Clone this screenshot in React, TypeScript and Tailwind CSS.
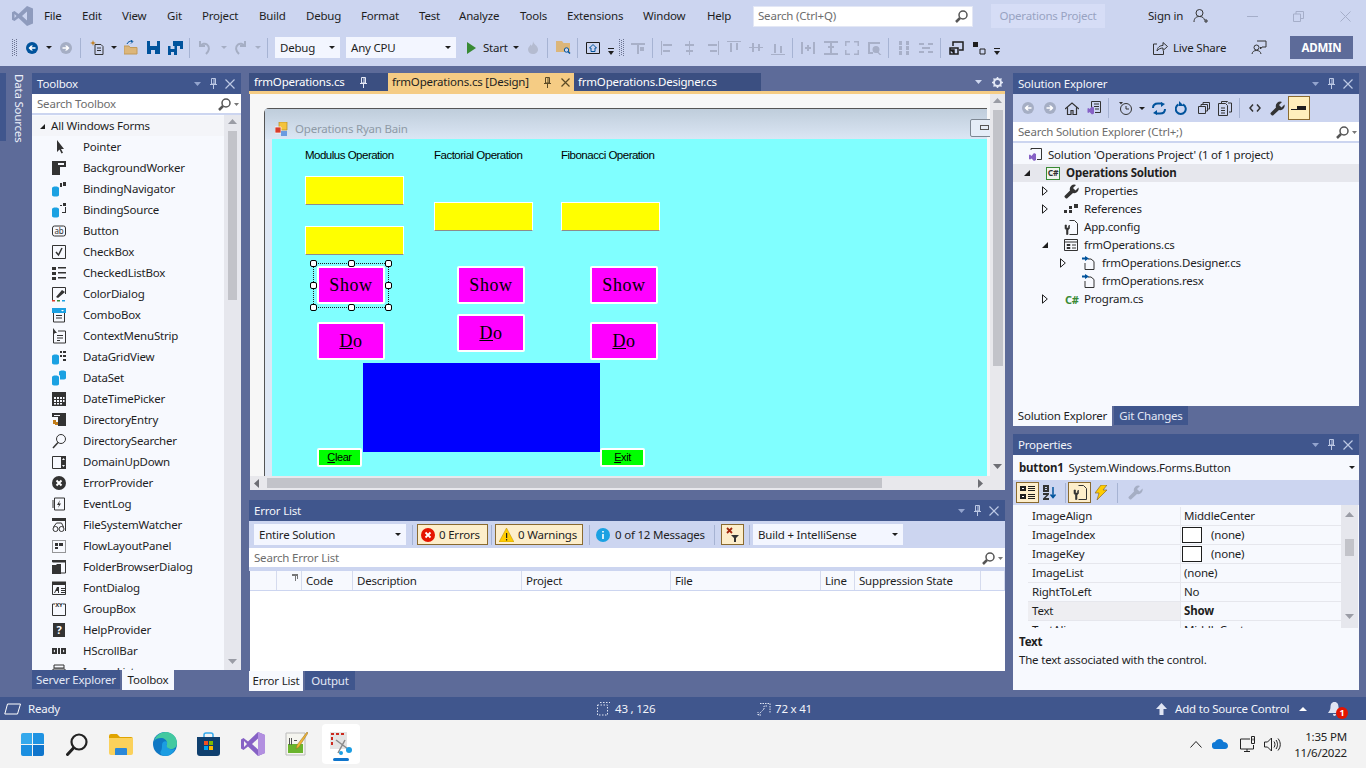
import type { ReactNode } from "react";

const toolboxItems = [
  "Pointer", "BackgroundWorker", "BindingNavigator", "BindingSource", "Button", "CheckBox", "CheckedListBox",
  "ColorDialog", "ComboBox", "ContextMenuStrip", "DataGridView", "DataSet", "DateTimePicker", "DirectoryEntry",
  "DirectorySearcher", "DomainUpDown", "ErrorProvider", "EventLog", "FileSystemWatcher", "FlowLayoutPanel",
  "FolderBrowserDialog", "FontDialog", "GroupBox", "HelpProvider", "HScrollBar", "ImageList"
];

const menus = ["File", "Edit", "View", "Git", "Project", "Build", "Debug", "Format", "Test", "Analyze", "Tools", "Extensions", "Window", "Help"];

const properties: Array<{ name: string; value: string; swatch?: boolean; active?: boolean }> = [
  { name: "ImageAlign", value: "MiddleCenter" },
  { name: "ImageIndex", value: "(none)", swatch: true },
  { name: "ImageKey", value: "(none)", swatch: true },
  { name: "ImageList", value: "(none)" },
  { name: "RightToLeft", value: "No" },
  { name: "Text", value: "Show", active: true },
  { name: "TextAlign", value: "MiddleCenter" }
];

export default function App() {
  return (
    <div className="flex h-[768px] w-[1366px] flex-col overflow-hidden bg-[#5d6b99] font-['Noto_Sans',sans-serif] text-[11.5px] tracking-[-0.2px] text-[#1e1e1e]">
      <TitleBar />
      <MainToolbar />
      <div className="flex h-[631px] pt-[7px]">
        <div className="w-[32px] shrink-0 pt-0">
          <div className="flex h-[68px]">
            <div className="w-[6px] bg-[#40568d]" />
            <div className="whitespace-nowrap pl-[5px] pt-[1px] text-[#eef1fb] [writing-mode:vertical-rl]">Data Sources</div>
          </div>
        </div>
        <ToolboxPanel />
        <div className="ml-[8px] flex w-[756px] shrink-0 flex-col">
          <EditorTabs />
          <Designer />
          <ErrorList />
        </div>
        <div className="ml-[8px] flex w-[346px] shrink-0 flex-col">
          <SolutionExplorer />
          <PropertiesPanel />
        </div>
      </div>
      <StatusBar />
      <Taskbar />
    </div>
  );
}

function TitleBar() {
  return (
    <div className="flex h-[32px] shrink-0 items-center bg-[#ccd5f0]">
      <div className="ml-[12px] w-[32px]">
        <svg width="21" height="20" viewBox="0 0 21 20"><path d="M15 0l6 2.600v14.800L15 20 6.500 12l-4 3L0 13.800V6.200L2.500 5l4 3zM15 5.500L10 10l5 4.500zM2.500 8v4l2-2z" fill="#8e9bbd" /></svg>
      </div>
      <div className="grid grid-cols-[38px_40px_45px_35px_57px_47px_55px_58px_40px_61px_47px_76px_64px_45px]">
        {menus.map((menu) => <span key={menu}>{menu}</span>)}
      </div>
      <div className="ml-[1px] flex h-[21px] w-[220px] items-center justify-between border border-[#e3e7f5] bg-white px-[4px] text-[#6d6d6d]">
        <span>Search (Ctrl+Q)</span>
        <SearchGlass />
      </div>
      <div className="ml-[18px] flex h-[24px] w-[114px] items-center justify-center bg-[#d6ddf6] text-[#98a3c2]">Operations Project</div>
      <span className="ml-[43px] w-[45px]">Sign in</span>
      <svg width="16" height="16" viewBox="0 0 16 16" fill="none" stroke="#333" strokeWidth="1"><circle cx="6.500" cy="5" r="3.500" /><path d="M1 14c0-4 2.500-5.500 5.500-5.500S11 10 11.500 12M13 11v4M11 13h4" /></svg>
      <div className="ml-[38px] h-[1px] w-[11px] bg-[#a5aec9]" />
      <svg className="ml-[35px]" width="11" height="11" viewBox="0 0 11 11" fill="none" stroke="#a5aec9"><path d="M.5 3h7v7.500h-7zM3 3V.5h7.500v7H8" /></svg>
      <svg className="ml-[36px]" width="11" height="11" viewBox="0 0 11 11" stroke="#a5aec9"><path d="M.5.5l10 10M10.500.5l-10 10" /></svg>
    </div>
  );
}

function MainToolbar() {
  return (
    <div className="flex h-[34px] shrink-0 items-center bg-[#ccd5f0] pb-[3px] pl-[12px]">
      <Slot w="w-[14px]"><Grip /></Slot>
      <Slot w="w-[20px]"><ArrowCircle color="#00539c" dir="left" /></Slot>
      <Slot w="w-[14px]"><Caret /></Slot>
      <Slot w="w-[20px]"><ArrowCircle color="#a5aec4" dir="right" /></Slot>
      <Sep w="w-[10px]" />
      <Slot w="w-[21px]">
        <svg width="14" height="15" viewBox="0 0 14 15" fill="none"><path d="M5 4.500h6l2 2v8H5z" stroke="#333" /><path d="M7 8h4M7 10.500h4" stroke="#333" /><path d="M3 0l.7 2.300L6 3l-2.300.7L3 6l-.7-2.300L0 3l2.300-.7z" fill="#c27d1a" /></svg>
      </Slot>
      <Slot w="w-[13px]"><Caret /></Slot>
      <Slot w="w-[23px]">
        <svg width="15" height="15" viewBox="0 0 15 15"><path d="M0 6h5l1 1.500h7V14H0z" fill="#dcb67a" stroke="#c29a58" /><path d="M3 4c1-2.500 3-3 5-2.500M6.500 0L9 1.500 7 3.500" fill="none" stroke="#00539c" /></svg>
      </Slot>
      <Slot w="w-[21px]"><Floppy /></Slot>
      <Slot w="w-[21px]">
        <svg width="15" height="14" viewBox="0 0 15 14"><path d="M5 0h10v8h-3V5H5z" fill="#00539c" /><path d="M0 5h9v9H0z" fill="#00539c" /><path d="M2.500 5h4v3h-4zM3 11h3v3H3z" fill="#ccd5f0" /></svg>
      </Slot>
      <Sep w="w-[10px]" />
      <Slot w="w-[22px]"><UndoIcon /></Slot>
      <Slot w="w-[13px]"><Caret light /></Slot>
      <Slot w="w-[21px]"><UndoIcon flip /></Slot>
      <Slot w="w-[12px]"><Caret light /></Slot>
      <Sep w="w-[8px]" />
      <div className="w-[71px] shrink-0"><Combo label="Debug" w="w-[65px]" /></div>
      <div className="w-[121px] shrink-0"><Combo label="Any CPU" w="w-[110px]" /></div>
      <Slot w="w-[16px]"><svg width="9" height="12" viewBox="0 0 9 12"><path d="M0 0l9 6-9 6z" fill="#388a34" /></svg></Slot>
      <span className="w-[30px] shrink-0">Start</span>
      <Slot w="w-[15px]"><Caret /></Slot>
      <Slot w="w-[19px]"><svg width="10" height="13" viewBox="0 0 10 13"><path d="M5 0c0 3 5 4.500 5 8.500C10 11 8 13 5 13s-5-2-5-4.500C0 6 2 5.500 2.500 3.500 3.500 4 3.500 5 3.500 5 4.500 4 5 2 5 0z" fill="#b4bbd0" /></svg></Slot>
      <Sep w="w-[9px]" />
      <Slot w="w-[21px]"><svg width="15" height="13" viewBox="0 0 15 13"><path d="M0 0h6l1.500 2H14v9H0z" fill="#dcb67a" /><circle cx="10.500" cy="9" r="2.200" fill="#ccd5f0" stroke="#00539c" /><path d="M12 10.500l2 2" stroke="#00539c" strokeWidth="1.500" /></svg></Slot>
      <Sep w="w-[9px]" />
      <Slot w="w-[22px]"><svg width="14" height="12" viewBox="0 0 14 12" fill="none"><path d="M.5.5h13v11H.5z" stroke="#1e1e1e" /><path d="M7 2.500L3.500 6H5v3.500h4V6h1.500z" stroke="#00539c" /></svg></Slot>
      <Slot w="w-[11px]"><OverflowMark /></Slot>
      <Slot w="w-[12px]"><Grip /></Slot>
      <Slot w="w-[21px]"><GrayTool d="M0 2h14v2H0zM6 4h2v9H6zM9 6h4v4H9z" /></Slot>
      <Sep w="w-[9px]" />
      <Slot w="w-[22px]"><GrayTool d="M0 0h1v14H0zM2 3h9v2H2zM2 9h7v2H2z" /></Slot>
      <Slot w="w-[22px]"><GrayTool d="M6 0h1v14H6zM2 3h9v2H2zM3 9h7v2H3z" /></Slot>
      <Slot w="w-[22px]"><GrayTool d="M13 0h1v14h-1zM3 3h9v2H3zM5 9h7v2H5z" /></Slot>
      <Slot w="w-[22px]"><GrayTool d="M0 0h14v1H0zM3 2h2v9H3zM9 2h2v7H9z" /></Slot>
      <Slot w="w-[22px]"><GrayTool d="M0 6h14v1H0zM3 2h2v9H3zM9 3h2v7H9z" /></Slot>
      <Slot w="w-[21px]"><GrayTool d="M0 13h14v1H0zM3 3h2v9H3zM9 5h2v7H9z" /></Slot>
      <Sep w="w-[9px]" />
      <Slot w="w-[23px]"><GrayTool d="M0 1h2v12H0zM12 1h2v12h-2zM6 4h2v6H6zM4 6h6v2H4z" /></Slot>
      <Slot w="w-[21px]"><GrayTool d="M0 0h14v2H0zM0 12h14v2H0zM6 2h2v10H6zM4 5h6v2H4z" /></Slot>
      <Slot w="w-[23px]"><GrayTool d="M0 0h5v1.500H1.500V5H0zM9 0h5v5h-1.500V1.500H9zM0 9h1.500v3.500H5V14H0zM12.500 9H14v5H9v-1.500h3.500z" /></Slot>
      <Slot w="w-[20px]"><GrayTool d="M0 1h12v2H2v8h3v2H0zM8 5a3.500 3.500 0 110 7 3.500 3.500 0 010-7zM10.500 11l3 3-1 .8-3-3z" /></Slot>
      <Sep w="w-[11px]" />
      <Slot w="w-[20px]"><GrayTool d="M0 0h3v4H0zM0 10h3v4H0zM0 5h3v4H0zM7 0h3v4H7zM7 10h3v4H7zM7 5h3v4H7z" /></Slot>
      <Slot w="w-[21px]"><GrayTool d="M0 2h5v2H0zM0 10h5v2H0zM9 2h5v2H9zM9 10h5v2H9zM3 6h8v2H3z" /></Slot>
      <Sep w="w-[9px]" />
      <Slot w="w-[23px]"><svg width="15" height="14" viewBox="0 0 15 14" fill="none" stroke="#1e1e1e" strokeWidth="1.500"><path d="M4 5V1h10v8h-4M1 7v6h8V7z" /><path d="M1 9h4v4" fill="#1e1e1e" /></svg></Slot>
      <Slot w="w-[22px]"><svg width="14" height="14" viewBox="0 0 14 14"><path d="M1 1h5v5H1z" fill="#1e1e1e" /><path d="M8 8h5v5H8z" fill="#ccd5f0" stroke="#1e1e1e" /></svg></Slot>
      <Slot w="w-[10px]"><OverflowMark /></Slot>
      <div className="ml-[149px] flex w-[75px] items-center gap-[5px] whitespace-nowrap">
        <svg className="shrink-0" width="15" height="14" viewBox="0 0 15 14" fill="none" stroke="#333"><path d="M4 3H.5v10.500h10V10M4 10c.5-4 3-5.500 6-5.500V1.500l4.500 4-4.500 4V7c-2.500 0-4.500 1-6 3z" /></svg>
        <span>Live Share</span>
      </div>
      <svg className="ml-[23px]" width="16" height="16" viewBox="0 0 16 16" fill="none" stroke="#333"><circle cx="5.500" cy="7.500" r="2.500" /><path d="M1 14c.5-2.500 2-3.500 4.500-3.500S9.500 11.500 10 14M6 1h9v6h-4l-1.500 2V7" /></svg>
      <div className="ml-[23px] flex h-[23px] w-[63px] items-center justify-center bg-[#5d6b99] font-bold text-white">ADMIN</div>
    </div>
  );
}

function ToolboxPanel() {
  return (
    <div className="flex w-[209px] shrink-0 flex-col">
      <PanelTitle title="Toolbox" />
      <SearchRow placeholder="Search Toolbox" />
      <div className="flex h-[555px] bg-[#f7f9fe]">
        <div className="w-[192px] overflow-hidden pt-[1px]">
          <div className="flex h-[20px] items-center bg-[#f4f5f9]">
            <svg className="ml-[8px] mr-[6px]" width="5" height="5" viewBox="0 0 5 5"><path d="M5 0v5H0z" fill="#1e1e1e" /></svg>
            <span>All Windows Forms</span>
          </div>
          {toolboxItems.map((name) => (
            <div key={name} className="flex h-[21px] items-center">
              <div className="ml-[20px] flex w-[31px] shrink-0"><ToolIcon name={name} /></div>
              <span>{name}</span>
            </div>
          ))}
        </div>
        <VScroll trackHeight="h-[169px]" offset="mt-[7px]" />
      </div>
      <div className="flex h-[20px] items-start">
        <div className="flex h-[19px] w-[88px] items-center justify-center bg-[#40568d] text-[#e3e8f6]">Server Explorer</div>
        <div className="ml-[2px] flex h-[20px] w-[52px] items-center justify-center bg-[#f7f9fe]">Toolbox</div>
      </div>
    </div>
  );
}

function EditorTabs() {
  return (
    <div className="flex h-[21px] shrink-0 items-start border-b-[3px] border-[#f5cc84]">
      <div className="flex h-[18px] w-[139px] items-center justify-between bg-[#3b4f81] pl-[5px] pr-[21px] text-white">
        <span>frmOperations.cs</span>
        <PinIcon color="#e4e8f5" />
      </div>
      <div className="flex h-[18px] w-[186px] items-center bg-[#f5cc84] pl-[4px]">
        <span className="w-[152px] shrink-0">frmOperations.cs [Design]</span>
        <PinIcon color="#5b4a24" />
        <svg className="ml-[10px]" width="9" height="9" viewBox="0 0 9 9" stroke="#5b4a24" strokeWidth="1.200"><path d="M.5.500l8 8M8.500.500l-8 8" /></svg>
      </div>
      <div className="flex h-[18px] w-[187px] items-center bg-[#3b4f81] pl-[4px] text-white">frmOperations.Designer.cs</div>
      <div className="ml-auto flex h-[18px] items-center gap-[10px] pr-[2px]">
        <svg width="7" height="4" viewBox="0 0 7 4"><path d="M0 0h7L3.500 4z" fill="#cfd8ef" /></svg>
        <svg width="11" height="11" viewBox="0 0 11 11"><circle cx="5.500" cy="5.500" r="3.500" fill="none" stroke="#e3e8f6" strokeWidth="2" /><path d="M5.500 0v2M5.500 9v2M0 5.500h2M9 5.500h2M1.500 1.500L3 3M8 8l1.500 1.500M9.500 1.500L8 3M3 8L1.500 9.500" stroke="#e3e8f6" strokeWidth="1.500" /></svg>
      </div>
    </div>
  );
}

function Designer() {
  return (
    <div className="ml-[1px] flex h-[396px] w-[755px] shrink-0 flex-col bg-[#f7f7f7]">
      <div className="flex h-[382px]">
        <div className="w-[740px] overflow-hidden pl-[14px] pt-[14px]">
          <div className="w-[723px] rounded-tl-[5px] border-l border-t border-[#555] bg-[#dfe8f5]">
            <div className="relative flex h-[30px] items-center bg-gradient-to-b from-[#bfcddb] to-[#dbe6f4] pl-[10px] pt-[9px] text-[#8e9aa6]">
              <svg width="14" height="14" viewBox="0 0 14 14"><path d="M4 0h8v8H4z" fill="#f4c33d" stroke="#b58a20" strokeWidth=".7" /><path d="M0 5h6v6H0z" fill="#d83b2a" stroke="#fff" strokeWidth=".7" /><path d="M6 9h6v5H6z" fill="#6a9be0" /></svg>
              <span className="ml-[6px]">Operations Ryan Bain</span>
              <div className="absolute left-[705px] top-[10px] h-[18px] w-[30px] rounded-[2px] border border-[#7d8792] bg-[#e5edf7]">
                <div className="ml-[9px] mt-[5px] h-[5px] w-[9px] border border-[#555]" />
              </div>
            </div>
            <FormCanvas />
          </div>
        </div>
        <div className="flex w-[15px] flex-col items-center bg-[#e8e8ec]">
          <svg className="mt-[4px]" width="9" height="5" viewBox="0 0 9 5"><path d="M4.500 0L9 5H0z" fill="#9a9ca5" /></svg>
          <div className="mt-[7px] h-[256px] w-[10px] bg-[#c2c3c9]" />
          <svg className="mb-[7px] mt-auto" width="9" height="5" viewBox="0 0 9 5"><path d="M0 0h9L4.500 5z" fill="#6d6e74" /></svg>
        </div>
      </div>
      <div className="flex h-[14px] items-center bg-[#e8e8ec] pl-[4px]">
        <svg width="5" height="9" viewBox="0 0 5 9"><path d="M5 0v9L0 4.500z" fill="#6d6e74" /></svg>
        <div className="ml-[8px] h-[10px] w-[615px] bg-[#c2c3c9]" />
        <svg className="ml-[96px]" width="5" height="9" viewBox="0 0 5 9"><path d="M0 0v9l5-4.500z" fill="#6d6e74" /></svg>
      </div>
    </div>
  );
}

function FormCanvas() {
  return (
    <div className="relative ml-[7px] h-[337px] w-[715px] bg-[#80ffff] font-['Liberation_Sans',sans-serif]">
      <FormLabel text="Modulus Operation" className="left-[33px]" />
      <FormLabel text="Factorial Operation" className="left-[162px]" />
      <FormLabel text="Fibonacci Operation" className="left-[289px]" />
      <YellowBox className="left-[33px] top-[37px]" />
      <YellowBox className="left-[33px] top-[87px]" />
      <YellowBox className="left-[162px] top-[63px]" />
      <YellowBox className="left-[289px] top-[63px]" />
      <MagentaButton label="Show" className="left-[45px] top-[127px]" />
      <MagentaButton label="Do" mnemonic className="left-[45px] top-[183px]" />
      <MagentaButton label="Show" className="left-[185px] top-[127px]" />
      <MagentaButton label="Do" mnemonic className="left-[185px] top-[175px]" />
      <MagentaButton label="Show" className="left-[318px] top-[127px]" />
      <MagentaButton label="Do" mnemonic className="left-[318px] top-[183px]" />
      <div className="absolute left-[91px] top-[224px] h-[89px] w-[237px] bg-[#0000ff]" />
      <GreenButton first="C" rest="lear" className="left-[45px] top-[309px]" />
      <GreenButton first="E" rest="xit" className="left-[328px] top-[309px]" />
      <div className="absolute left-[41px] top-[124px] h-[45px] w-[76px] border border-dotted border-[#222]" />
      {["left-[38px] top-[121px]", "left-[76px] top-[121px]", "left-[113px] top-[121px]", "left-[38px] top-[143px]", "left-[113px] top-[143px]", "left-[38px] top-[165px]", "left-[76px] top-[165px]", "left-[113px] top-[165px]"].map((place) => (
        <div key={place} className={`absolute h-[7px] w-[7px] rounded-[2px] border border-black bg-white ${place}`} />
      ))}
    </div>
  );
}

function FormLabel({ text, className }: { text: string; className: string }) {
  return <span className={`absolute top-[8px] whitespace-nowrap text-[11.5px] tracking-[-0.5px] text-black ${className}`}>{text}</span>;
}

function YellowBox({ className }: { className: string }) {
  return <div className={`absolute h-[29px] w-[99px] border border-b-[#8c8c8c] border-l-white border-r-white border-t-white bg-[#ffff00] ${className}`} />;
}

function MagentaButton({ label, mnemonic, className }: { label: string; mnemonic?: boolean; className: string }) {
  return (
    <div className={`absolute flex h-[38px] w-[68px] items-center justify-center rounded-[2px] border-[2px] border-white bg-[#ff00ff] font-['Liberation_Serif',serif] text-[18px] tracking-[0.6px] text-black ${className}`}>
      {mnemonic ? <span><span className="underline">{label[0]}</span>{label.slice(1)}</span> : label}
    </div>
  );
}

function GreenButton({ first, rest, className }: { first: string; rest: string; className: string }) {
  return (
    <div className={`absolute flex h-[19px] w-[45px] items-center justify-center rounded-[2px] border-[2px] border-white bg-[#00ff00] text-[11px] tracking-[-0.4px] text-black ${className}`}>
      <span><span className="underline">{first}</span>{rest}</span>
    </div>
  );
}

function ErrorList() {
  return (
    <div className="mt-[10px] flex flex-col">
      <PanelTitle title="Error List" />
      <div className="flex h-[27px] items-center bg-[#ccd5f0] pl-[5px]">
        <Combo label="Entire Solution" w="w-[152px]" />
        <div className="ml-[6px]"><Sep w="w-[5px]" /></div>
        <FilterButton w="w-[71px]">
          <svg width="14" height="14" viewBox="0 0 14 14"><circle cx="7" cy="7" r="7" fill="#e51400" /><path d="M4.500 4.500l5 5M9.500 4.500l-5 5" stroke="#fff" strokeWidth="1.800" /></svg>
          <span>0 Errors</span>
        </FilterButton>
        <div className="ml-[3px]"><Sep w="w-[4px]" /></div>
        <FilterButton w="w-[88px]">
          <svg width="15" height="14" viewBox="0 0 15 14"><path d="M7.500 0L15 14H0z" fill="#ffcc00" stroke="#b58a00" strokeWidth=".5" /><path d="M7 5h1.200v5H7zM7 11h1.200v1.400H7z" fill="#1e1e1e" /></svg>
          <span>0 Warnings</span>
        </FilterButton>
        <div className="ml-[6px]"><Sep w="w-[6px]" /></div>
        <div className="flex w-[113px] items-center gap-[5px] whitespace-nowrap pl-[1px]">
          <svg className="shrink-0" width="14" height="14" viewBox="0 0 14 14"><circle cx="7" cy="7" r="7" fill="#1ba1e2" /><path d="M6.200 3h1.600v1.500H6.200zM6.200 6h1.600v5H6.200z" fill="#fff" /></svg>
          <span>0 of 12 Messages</span>
        </div>
        <div className="ml-[6px]"><Sep w="w-[7px]" /></div>
        <div className="flex h-[21px] w-[23px] items-center justify-center border border-[#8a6a2f] bg-[#fdeecb]">
          <svg width="14" height="15" viewBox="0 0 14 15"><path d="M1 1l5 5M6 1L1 6" stroke="#a1260d" strokeWidth="1.800" /><path d="M5 8h8L10 11v4H8v-4z" fill="#333" /></svg>
        </div>
        <div className="ml-[5px]"><Sep w="w-[4px]" /></div>
        <Combo label="Build + IntelliSense" w="w-[150px]" />
      </div>
      <SearchRow placeholder="Search Error List" />
      <div className="h-[2px] bg-[#ccd5f0]" />
      <div className="ml-[1px] grid h-[20px] grid-cols-[27px_25px_51px_169px_149px_150px_34px_126px_24px] border-b border-[#ccd5f0] bg-[#f7f9fe]">
        {["", "", "Code", "Description", "Project", "File", "Line", "Suppression State", ""].map((heading, index) => (
          <div key={`${heading}-${index}`} className="relative flex items-center border-r border-[#d5dbee] pl-[4px]">
            {index === 1 ? <svg className="absolute right-[3px] top-[3px]" width="6" height="7" viewBox="0 0 6 7"><path d="M0 0h6v2H0zM3 2h1v5H3zM5 2h1v3H5z" fill="#777" /></svg> : null}
            {heading}
          </div>
        ))}
      </div>
      <div className="ml-[1px] h-[80px] bg-white" />
      <div className="flex h-[20px] items-start">
        <div className="flex h-[20px] w-[54px] items-center justify-center bg-[#f7f9fe]">Error List</div>
        <div className="ml-[2px] flex h-[19px] w-[50px] items-center justify-center bg-[#40568d] text-[#e3e8f6]">Output</div>
      </div>
    </div>
  );
}

function SolutionExplorer() {
  return (
    <div className="flex h-[353px] flex-col">
      <PanelTitle title="Solution Explorer" />
      <div className="flex h-[28px] items-center bg-[#ccd5f0] pl-[9px]">
        <Slot w="w-[22px]"><ArrowCircle color="#a5aec4" dir="left" /></Slot>
        <Slot w="w-[21px]"><ArrowCircle color="#a5aec4" dir="right" /></Slot>
        <Slot w="w-[22px]"><HomeIcon /></Slot>
        <Slot w="w-[21px]"><VsFileIcon /></Slot>
        <Sep w="w-[11px]" />
        <Slot w="w-[20px]"><svg width="13" height="14" viewBox="0 0 13 14" fill="none" stroke="#333"><circle cx="7" cy="8" r="5.500" /><path d="M7 5v3h3" /><path d="M0 1h4L2 3.500z" fill="#333" stroke="none" /></svg></Slot>
        <Slot w="w-[13px]"><Caret /></Slot>
        <Slot w="w-[23px]"><svg width="14" height="13" viewBox="0 0 14 13" fill="none" stroke="#00539c" strokeWidth="2"><path d="M1 6c0-3 2-4.500 5-4.500h4M13 7c0 3-2 4.500-5 4.500H4" /><path d="M9 0l4 2-4 3zM5 8l-4 3 4 2z" fill="#00539c" stroke="none" /></svg></Slot>
        <Slot w="w-[23px]"><svg width="12" height="14" viewBox="0 0 12 14" fill="none" stroke="#00539c" strokeWidth="2"><path d="M8 3.500a5 5 0 11-4.500 0" /><path d="M4 0v5H9z" fill="#00539c" stroke="none" /></svg></Slot>
        <Slot w="w-[20px]"><svg width="12" height="12" viewBox="0 0 12 12" fill="none" stroke="#333"><path d="M.5 4.500h7v7h-7zM3 4V2.500h6.500V9H8M5 2V.5h6.500V7H10" /></svg></Slot>
        <Slot w="w-[21px]"><svg width="14" height="15" viewBox="0 0 14 15" fill="none" stroke="#333"><path d="M3.500 2V.5h6l-1 1M.5 2.500h7l2 2v10H.5zM3 7h4M3 9.500h4M3 12h4M10 2h3.500v9H11" /></svg></Slot>
        <Sep w="w-[10px]" />
        <Slot w="w-[21px]"><svg width="12" height="8" viewBox="0 0 12 8" fill="none" stroke="#333" strokeWidth="1.500"><path d="M4 .5L1 4l3 3.500M8 .5L11 4 8 7.500" /></svg></Slot>
        <Slot w="w-[18px]"><WrenchIcon color="#333" /></Slot>
        <div className="flex h-[24px] w-[22px] items-center justify-center border border-[#8a6a2f] bg-[#ffefbb]">
          <svg width="16" height="6" viewBox="0 0 16 6"><path d="M0 4h6V1h9v4H0z" fill="#1e1e1e" /></svg>
        </div>
      </div>
      <SearchRow placeholder="Search Solution Explorer (Ctrl+;)" />
      <div className="h-[263px] bg-[#f7f9fe] pt-[3px]">
        <TreeRow indent="-ml-[7px]" icon={<VsSolutionIcon />}>Solution 'Operations Project' (1 of 1 project)</TreeRow>
        <TreeRow arrow="open" indent="ml-[11px]" active icon={<CsProjectIcon />}><b>Operations Solution</b></TreeRow>
        <TreeRow arrow="closed" indent="ml-[29px]" icon={<WrenchIcon color="#333" />}>Properties</TreeRow>
        <TreeRow arrow="closed" indent="ml-[29px]" icon={<RefsIcon />}>References</TreeRow>
        <TreeRow indent="ml-[29px]" icon={<ConfigIcon />}>App.config</TreeRow>
        <TreeRow arrow="open" indent="ml-[29px]" icon={<FormIcon />}>frmOperations.cs</TreeRow>
        <TreeRow arrow="closed" indent="ml-[47px]" icon={<DependentFileIcon />}>frmOperations.Designer.cs</TreeRow>
        <TreeRow indent="ml-[47px]" icon={<DependentFileIcon />}>frmOperations.resx</TreeRow>
        <TreeRow arrow="closed" indent="ml-[29px]" icon={<span className="ml-[1px] text-[11px] font-bold leading-none text-[#388a34]">C#</span>}>Program.cs</TreeRow>
      </div>
      <div className="flex h-[20px] items-start">
        <div className="flex h-[20px] w-[99px] items-center justify-center bg-[#f7f9fe]">Solution Explorer</div>
        <div className="ml-[2px] flex h-[19px] w-[74px] items-center justify-center bg-[#40568d] text-[#e3e8f6]">Git Changes</div>
      </div>
    </div>
  );
}

function TreeRow({ arrow, indent, icon, active, children }: { arrow?: "open" | "closed"; indent: string; icon: ReactNode; active?: boolean; children: ReactNode }) {
  return (
    <div className={`flex h-[18px] items-center ${active ? "bg-[#e6e7ed]" : ""}`}>
      <div className={`flex w-[6px] shrink-0 items-center ${indent}`}>
        {arrow === "open" ? <svg width="6" height="6" viewBox="0 0 6 6"><path d="M6 0v6H0z" fill="#1e1e1e" /></svg> : null}
        {arrow === "closed" ? <svg width="6" height="10" viewBox="0 0 6 10"><path d="M.5.800v8.400L5.300 5z" fill="none" stroke="#1e1e1e" /></svg> : null}
      </div>
      <div className="ml-[16px] flex w-[20px] shrink-0 items-center">{icon}</div>
      <span className="whitespace-nowrap">{children}</span>
    </div>
  );
}

function PropertiesPanel() {
  return (
    <div className="mt-[8px] flex flex-col">
      <PanelTitle title="Properties" />
      <div className="flex h-[25px] items-center justify-between bg-[#f7f9fe] pl-[6px] pr-[4px]">
        <span><b>button1</b> <span className="ml-[2px]">System.Windows.Forms.Button</span></span>
        <svg width="6" height="3" viewBox="0 0 6 3"><path d="M0 0h6L3 3z" fill="#1e1e1e" /></svg>
      </div>
      <div className="flex h-[25px] items-center bg-[#ccd5f0] pl-[3px]">
        <div className="flex h-[21px] w-[23px] items-center justify-center border border-[#8a6a2f] bg-[#fdeecb]">
          <svg width="15" height="15" viewBox="0 0 15 15"><path d="M0 1h6v5H0zM0 9h6v5H0zM8 1h7v1H8zM8 3h7v1H8zM8 5h7v1H8zM8 9h7v1H8zM8 11h7v1H8zM8 13h7v1H8z" fill="#1e1e1e" /><path d="M2 3h2v1H2zM2 11h2v1H2z" fill="#fff" /></svg>
        </div>
        <Slot w="w-[26px]" className="pl-[3px]"><svg width="15" height="15" viewBox="0 0 15 15"><path d="M1 0h6v7H1zM1 8h6v1.500L3.500 13H7v2H1v-1.500L4.500 10H1z" fill="#333" /><path d="M3 2h2v1H3zM3 4h2v1H3z" fill="#ccd5f0" /><path d="M11 2v10M8.500 9.500l2.500 3 2.500-3" stroke="#00539c" strokeWidth="1.500" fill="none" /></svg></Slot>
        <Sep w="w-[3px]" />
        <div className="flex h-[21px] w-[23px] items-center justify-center border border-[#8a6a2f] bg-[#fdeecb]"><ConfigIcon /></div>
        <Slot w="w-[26px]" className="pl-[4px]"><svg width="12" height="15" viewBox="0 0 12 15"><path d="M6 0h6L8 5h4L2 15l2-7H0z" fill="#ffcc00" stroke="#8a6a2f" strokeWidth=".7" /></svg></Slot>
        <Sep w="w-[6px]" />
        <div className="ml-[5px]"><WrenchIcon color="#a5aec4" /></div>
      </div>
      <div className="flex h-[123px] overflow-hidden bg-[#f7f9fe]">
        <div className="w-[328px]">
          <div className="h-[2px]" />
          {properties.map((row) => (
            <div key={row.name} className="ml-[15px] grid h-[19px] grid-cols-[153px_1fr] border-b border-[#e6e7ed]">
              <div className={`flex items-center border-r border-[#e6e7ed] pl-[4px] ${row.active ? "bg-[#eeeef2]" : ""}`}>{row.name}</div>
              <div className={`flex items-center pl-[3px] ${row.active ? "font-bold" : ""}`}>
                {row.swatch ? <span className="-ml-[2px] mr-[9px] h-[16px] w-[20px] border border-[#1e1e1e] bg-white" /> : null}
                {row.value}
              </div>
            </div>
          ))}
        </div>
        <div className="flex w-[17px] flex-col items-center bg-[#e6e7ed]">
          <svg className="mt-[7px]" width="9" height="5" viewBox="0 0 9 5"><path d="M4.500 0L9 5H0z" fill="#9a9ca5" /></svg>
          <div className="mt-[22px] h-[17px] w-[9px] bg-[#c2c3c9]" />
          <svg className="mb-[9px] mt-auto" width="9" height="5" viewBox="0 0 9 5"><path d="M0 0h9L4.500 5z" fill="#9a9ca5" /></svg>
        </div>
      </div>
      <div className="h-[62px] bg-[#f7f9fe] pl-[6px] pt-[6px]">
        <div className="font-bold leading-[16px]">Text</div>
        <div className="mt-[2px] leading-[16px]">The text associated with the control.</div>
      </div>
    </div>
  );
}

function StatusBar() {
  return (
    <div className="flex h-[23px] shrink-0 items-center bg-[#40568d] text-[#f3f5fb]">
      <svg className="ml-[4px]" width="17" height="12" viewBox="0 0 17 12" fill="none" stroke="#fff"><path d="M3.500 1h13l-3 10H.8z" /></svg>
      <span className="ml-[7px] w-[569px]">Ready</span>
      <svg width="14" height="14" viewBox="0 0 14 14" fill="none" stroke="#dfe4f3" strokeDasharray="1.500 1.500"><path d="M.5 3h10v10H.5zM3 .5h10" /></svg>
      <span className="ml-[4px] w-[142px]">43 , 126</span>
      <svg width="14" height="14" viewBox="0 0 14 14" fill="none" stroke="#dfe4f3"><path d="M3 1.500h10v9.500M1 13l6-6M4 13H1v-3M10 4H7v3" strokeDasharray="1.500 1" /></svg>
      <span className="ml-[4px] w-[381px]">72 x 41</span>
      <svg width="11" height="12" viewBox="0 0 11 12"><path d="M5.500 0L11 6H7.500v6h-4V6H0z" fill="#dfe4f3" /></svg>
      <span className="ml-[8px] w-[124px] whitespace-nowrap">Add to Source Control</span>
      <svg width="8" height="4" viewBox="0 0 8 4"><path d="M4 0l4 4H0z" fill="#fff" /></svg>
      <div className="relative ml-[21px]">
        <svg width="13" height="14" viewBox="0 0 13 14"><path d="M6.500 0C9.500 0 10.500 2.500 10.500 5c0 3 1.500 4 2.500 6H0c1-2 2.500-3 2.500-6C2.500 2.500 3.500 0 6.500 0zM5 12h3c0 1-.5 2-1.500 2S5 13 5 12z" fill="#dfe4f3" /></svg>
        <div className="absolute left-[8px] top-[5px] flex h-[12px] w-[12px] items-center justify-center rounded-full bg-[#e51400] text-[9px] font-bold leading-none text-white">1</div>
      </div>
    </div>
  );
}

function Taskbar() {
  return (
    <div className="flex h-[48px] shrink-0 items-center bg-[#f3f3f3]">
      <div className="ml-[21px] grid h-[23px] w-[23px] grid-cols-2 gap-[1px]">
        <div className="rounded-tl-[2px] bg-[#35a9ec]" />
        <div className="rounded-tr-[2px] bg-[#1f93e2]" />
        <div className="rounded-bl-[2px] bg-[#1b8fe0]" />
        <div className="rounded-br-[2px] bg-[#0f75cc]" />
      </div>
      <svg className="ml-[22px]" width="22" height="23" viewBox="0 0 22 23" fill="none" stroke="#222"><circle cx="13" cy="9" r="7.500" strokeWidth="2.200" /><path d="M7.500 15L1.500 21.500" strokeWidth="3" strokeLinecap="round" /></svg>
      <svg className="ml-[21px]" width="24" height="21" viewBox="0 0 24 21"><path d="M0 2a2 2 0 012-2h6l3 3h11a2 2 0 012 2v3H0z" fill="#e0a400" /><path d="M0 4h24v15a2 2 0 01-2 2H2a2 2 0 01-2-2z" fill="#fbd15b" /><path d="M7 14h10a1 1 0 011 1v6H6v-6a1 1 0 011-1z" fill="#2b88d8" /></svg>
      <svg className="ml-[20px]" width="24" height="24" viewBox="0 0 24 24"><circle cx="12" cy="12" r="12" fill="#0f78c4" /><path d="M1 9C3 3 8 0 13 0c6 0 11 5 11 11 0 4-3 6-6 6-2 0-5-1-5-3 0-1 1-1 1-3 0-3-3-5-6-5-3 0-6 1-7 3z" fill="#43c9a0" /><path d="M9 13c0-3 3-5 5-3 1 1-1 2 0 5 1 2 5 3 8 2-2 4-5 7-10 7-3 0-6-3-4-5 1-2 1-4 1-6z" fill="#1b9de2" /></svg>
      <svg className="ml-[20px]" width="23" height="24" viewBox="0 0 23 24"><path d="M7 6V3a2 2 0 012-2h5a2 2 0 012 2v3" fill="none" stroke="#35a9ec" strokeWidth="1.500" /><path d="M0 5h23v16a3 3 0 01-3 3H3a3 3 0 01-3-3z" fill="#0f3f6e" /><path d="M7 9h4v4H7z" fill="#f25022" /><path d="M12 9h4v4h-4z" fill="#7fba00" /><path d="M7 14h4v4H7z" fill="#00a4ef" /><path d="M12 14h4v4h-4z" fill="#ffb900" /></svg>
      <svg className="ml-[21px]" width="24" height="24" viewBox="0 0 24 24"><path d="M17 0l7 3v18l-7 3L7 14.500 2.500 18 0 16.500v-9L2.500 6 7 9.500z" fill="#8661c5" /><path d="M17 6.500L11 12l6 5.500zM3 9v6l3-3z" fill="#f3f3f3" /><path d="M17 0l7 3v18l-7 3z" fill="#b28fe0" /></svg>
      <svg className="ml-[20px]" width="23" height="24" viewBox="0 0 23 24"><path d="M1 1h19v22H1z" fill="#f5f5ef" stroke="#bbb" /><path d="M3 12h15v9H3z" fill="#6ab42d" /><path d="M4 6h1v7H4zM6 6h1v7H6zM9 8h3v1H9z" fill="#555" /><path d="M22 0l1 1-9 14-3 2 1-4z" fill="#f2b632" stroke="#8a6a2f" strokeWidth=".5" /></svg>
      <div className="ml-[14px] flex h-[40px] w-[38px] flex-col items-center rounded-[4px] bg-white">
        <svg className="mt-[7px]" width="24" height="24" viewBox="0 0 24 24"><path d="M1 1h17v17H1z" fill="#e4e4e4" /><path d="M2 2h3v2H2zM7 2h3v2H7zM12 2h3v2h-3zM2 6h2v3H2zM2 11h2v3H2z" fill="#cc2a1f" /><path d="M7 9l12 9M16 9l-7 13" stroke="#8a8a8a" strokeWidth="1.500" /><circle cx="20" cy="19" r="3" fill="#1b9de2" /><circle cx="12" cy="22" r="2" fill="#1b9de2" /></svg>
        <div className="mb-[3px] mt-auto h-[3px] w-[16px] rounded-full bg-[#0f75cc]" />
      </div>
      <svg className="ml-[830px]" width="12" height="7" viewBox="0 0 12 7" fill="none" stroke="#222"><path d="M.5 6.500l5.500-6 5.500 6" /></svg>
      <svg className="ml-[10px]" width="16" height="10" viewBox="0 0 16 10"><path d="M3.500 10a3.500 3.500 0 01-.5-7C4 1 6 0 7.500 0 10 0 11 1.500 11.500 3c2.500 0 4.500 1.500 4.500 4 0 2-1.500 3-3 3z" fill="#0f78d4" /></svg>
      <svg className="ml-[12px]" width="17" height="17" viewBox="0 0 17 17" fill="none" stroke="#222"><path d="M10 3H.5v10h13V9M4 15.500h6M7 13v2.500M11.500.5h3v7h-3zM13 2.500v2" /></svg>
      <svg className="ml-[7px]" width="17" height="15" viewBox="0 0 17 15" fill="none" stroke="#222"><path d="M.5 5h3L7.500 1v13l-4-4h-3zM10 4.500c1.300 1.800 1.300 4.200 0 6M12 3c2 2.800 2 6.200 0 9M14 1.500c3 3.800 3 8.200 0 12" /></svg>
      <div className="ml-[7px] w-[59px] pt-[1px] text-right leading-[16px] text-[#222]">
        <div>1:35 PM</div>
        <div>11/6/2022</div>
      </div>
    </div>
  );
}

function PanelTitle({ title }: { title: string }) {
  return (
    <div className="flex h-[21px] shrink-0 items-center bg-[#40568d] pl-[5px] pr-[6px] text-[#f3f5fb]">
      <span className="flex-1">{title}</span>
      <svg width="7" height="4" viewBox="0 0 7 4"><path d="M0 0h7L3.500 4z" fill="#93a4ce" /></svg>
      <div className="ml-[9px]"><PinIcon color="#bcc8e4" /></div>
      <svg className="ml-[8px]" width="10" height="10" viewBox="0 0 10 10" stroke="#bcc8e4" strokeWidth="1.200"><path d="M.5.500l9 9M9.500.500l-9 9" /></svg>
    </div>
  );
}

function SearchRow({ placeholder }: { placeholder: string }) {
  return (
    <div className="flex h-[21px] shrink-0 items-center justify-between border-b-[2px] border-[#ccd5f0] bg-white pl-[5px] pr-[2px] pt-[1px] text-[#6d6d6d]">
      <span>{placeholder}</span>
      <div className="flex items-center gap-[3px]">
        <SearchGlass />
        <svg width="5" height="3" viewBox="0 0 5 3"><path d="M0 0h5L2.500 3z" fill="#777" /></svg>
      </div>
    </div>
  );
}

function VScroll({ trackHeight, offset }: { trackHeight: string; offset: string }) {
  return (
    <div className="flex w-[17px] flex-col items-center bg-[#e6e7ed]">
      <svg className="mt-[4px]" width="9" height="5" viewBox="0 0 9 5"><path d="M4.500 0L9 5H0z" fill="#9a9ca5" /></svg>
      <div className={`w-[9px] bg-[#c2c3c9] ${trackHeight} ${offset}`} />
      <svg className="mb-[6px] mt-auto" width="9" height="5" viewBox="0 0 9 5"><path d="M0 0h9L4.500 5z" fill="#9a9ca5" /></svg>
    </div>
  );
}

function Combo({ label, w }: { label: string; w: string }) {
  return (
    <div className={`flex h-[21px] shrink-0 items-center justify-between bg-[#f3f6ff] pl-[5px] pr-[5px] ${w}`}>
      <span>{label}</span>
      <svg width="6" height="3" viewBox="0 0 6 3"><path d="M0 0h6L3 3z" fill="#1e1e1e" /></svg>
    </div>
  );
}

function FilterButton({ w, children }: { w: string; children: ReactNode }) {
  return <div className={`flex h-[21px] shrink-0 items-center gap-[4px] whitespace-nowrap border border-[#8a6a2f] bg-[#fdeecb] pl-[3px] ${w}`}>{children}</div>;
}

function Slot({ w, className, children }: { w: string; className?: string; children: ReactNode }) {
  return <div className={`flex shrink-0 items-center ${w} ${className ?? ""}`}>{children}</div>;
}

function Sep({ w }: { w: string }) {
  return <div className={`flex h-[20px] shrink-0 ${w}`}><div className="h-full w-[1px] bg-[#a6b3d3]" /></div>;
}

function Grip() {
  return <svg width="5" height="17" viewBox="0 0 5 17"><path d="M.5 0v17M2.500 1v16M4.500 0v17" stroke="#6b7391" strokeDasharray="1 1" /></svg>;
}

function Caret({ light }: { light?: boolean }) {
  return <svg width="6" height="3" viewBox="0 0 6 3"><path d="M0 0h6L3 3z" fill={light ? "#a5aec4" : "#1e1e1e"} /></svg>;
}

function OverflowMark() {
  return <svg className="mt-[8px]" width="6" height="7" viewBox="0 0 6 7"><path d="M0 0h6v1H0zM0 3h6L3 7z" fill="#1e1e1e" /></svg>;
}

function ArrowCircle({ color, dir }: { color: string; dir: "left" | "right" }) {
  return (
    <svg width="12" height="12" viewBox="0 0 12 12">
      <circle cx="6" cy="6" r="6" fill={color} />
      <path d={dir === "left" ? "M9.500 5.200H5.500l1.500-1.700H5L2.500 6 5 8.500h2L5.500 6.800h4z" : "M2.500 5.200h4L5 3.500h2L9.500 6 7 8.500H5l1.500-1.700h-4z"} fill="#fff" />
    </svg>
  );
}

function Floppy() {
  return <svg width="13" height="13" viewBox="0 0 13 13"><path d="M0 0h13v13H0z" fill="#00539c" /><path d="M3 0h7v5H3zM4 9h4v4H4z" fill="#ccd5f0" /></svg>;
}

function UndoIcon({ flip }: { flip?: boolean }) {
  return (
    <svg className={flip ? "-scale-x-100" : ""} width="12" height="15" viewBox="0 0 12 15" fill="none" stroke="#a5aec4" strokeWidth="2">
      <path d="M1 1v5h5M1.500 6C3 3.500 6 3 8 4.500c3 2.500 2.500 6-1 9.500" />
    </svg>
  );
}

function GrayTool({ d }: { d: string }) {
  return <svg width="14" height="14" viewBox="0 0 14 14"><path d={d} fill="#a8b0c8" /></svg>;
}

function SearchGlass() {
  return (
    <svg width="13" height="13" viewBox="0 0 13 13" fill="none">
      <circle cx="8" cy="5" r="4" stroke="#555" strokeWidth="1.500" />
      <path d="M5 8l-4 4" stroke="#555" strokeWidth="2.500" />
    </svg>
  );
}

function PinIcon({ color }: { color: string }) {
  return <svg width="7" height="11" viewBox="0 0 7 11" fill="none" stroke={color}><path d="M1.500.5h4v5.500h-4zM0 6.500h7M3.500 7v4M4 1v5" /></svg>;
}

function WrenchIcon({ color }: { color: string }) {
  return <svg width="15" height="15" viewBox="0 0 15 15"><path d="M14.500 3.500L11.500 6.500 9 4 12 1a4.500 4.500 0 00-6 5.500L.5 12v1L2 14.500h1L9 9a4.500 4.500 0 005.500-5.500z" fill={color} /></svg>;
}

function HomeIcon() {
  return <svg width="14" height="13" viewBox="0 0 14 13" fill="none" stroke="#333" strokeWidth="1.200"><path d="M0 7l7-6 7 6M2.500 5.500V12.500H6V8.500h2v4h3.500V5.500" /></svg>;
}

function VsFileIcon() {
  return <svg width="14" height="14" viewBox="0 0 14 14" fill="none"><path d="M4.500 8V.5h9v11H8" stroke="#333" /><path d="M7 3h5M7 5.500h5M8 8h4" stroke="#333" /><path d="M5 5.500l2 1v6l-2 1-2.500-2.500-1 1-1-.5v-4l1-.5 1 1z" fill="#8661c5" /></svg>;
}

function VsSolutionIcon() {
  return <svg width="14" height="14" viewBox="0 0 14 14" fill="none"><path d="M3 2V.5h10.500v11H9" stroke="#333" /><path d="M6 5l2 1v6l-2 1-2.500-2.500-1.500 1-1-.5v-4l1-.5L3.500 8z" fill="#8661c5" /></svg>;
}

function CsProjectIcon() {
  return <div className="flex h-[13px] w-[14px] items-center justify-center border border-[#388a34] bg-[#f0f5ee] text-[8.500px] font-bold leading-none text-[#333]">C#</div>;
}

function RefsIcon() {
  return <svg width="14" height="10" viewBox="0 0 14 10"><path d="M0 6h3v3H0zM5 6h3v3H5zM5 2h3v3H5zM10 0h4v4h-4z" fill="#333" /></svg>;
}

function ConfigIcon() {
  return <svg width="14" height="15" viewBox="0 0 14 15" fill="none"><path d="M5.500.5h5l3 3v11h-8" stroke="#333" /><path d="M1 5v3c0 1 1 1.500 1.500 2v4.500h1.500V10c.5-.5 1.500-1 1.500-2V5l-1 1v2H2.500V5z" fill="#333" stroke="#333" strokeWidth=".6" /></svg>;
}

function FormIcon() {
  return <svg width="14" height="12" viewBox="0 0 14 12" fill="none" stroke="#333"><path d="M.5.5h13v11H.5zM.5 3h13M3 5.500h3v1H3zM8 6h4M3 8.500h3v1H3zM8 9h4" /></svg>;
}

function DependentFileIcon() {
  return <svg width="13" height="14" viewBox="0 0 13 14" fill="none"><path d="M6 3h3l3 2.500v8H3V7" stroke="#333" /><path d="M0 1.500h3V0l4 2.500L3 5V3.500H0z" fill="#00539c" /></svg>;
}

function Cylinder() {
  return <path d="M0 7c0-1 1.500-1.600 3.500-1.600S7 6 7 7v7c0 1-1.500 1.600-3.500 1.600S0 15 0 14z" fill="#1ba1e2" />;
}

// one glyph per toolbox control, drawn on a 14x16 grid
function ToolIcon({ name }: { name: string }) {
  const dark = "#333";
  const glyphs: Record<string, ReactNode> = {
    Pointer: <path d="M5 1v12l2.500-2.500 2 4 1.500-.8-2-3.700H12z" fill={dark} />,
    BackgroundWorker: <path fillRule="evenodd" d="M0 1h14v6H8v8H0V7h0zM6 3v2h6V3z" fill={dark} />,
    BindingNavigator: <g><Cylinder /><path d="M8 2h2v4H8zM11 1h3v4h-3z" fill={dark} /></g>,
    BindingSource: <g><Cylinder /><path d="M11 1h3v3h-3zM8 3h2v1H8zM13 5h1v6h-4v-1h3z" fill={dark} /></g>,
    Button: <g><rect x=".5" y="3" width="13" height="10" rx="2" fill="none" stroke={dark} /><text x="7" y="11" fontSize="8" textAnchor="middle" fill={dark}>ab</text></g>,
    CheckBox: <g><path d="M.5 1.500h13v13H.5z" fill="none" stroke={dark} /><path d="M4 8l2.500 3L10 4" fill="none" stroke={dark} strokeWidth="1.500" /></g>,
    CheckedListBox: <path d="M0 2h4v3H0zM6 2h8v1.500H6zM0 7h4v3H0zM6 7h8v1.500H6zM0 12h4v3H0zM6 12h8v1.500H6z" fill={dark} />,
    ColorDialog: <g><path d="M.5 14V1.500h13V8" fill="none" stroke={dark} /><path d="M4 11l6-7 3 2-7 6z" fill={dark} /><path d="M0 14h3v1.500H0z" fill="#d83b2a" /><path d="M5 14h3v1.500H5z" fill="#388a34" /><path d="M10 14h3v1.500h-3z" fill="#1ba1e2" /></g>,
    ComboBox: <g><path d="M0 1h14v5H0z" fill="#1ba1e2" /><path d="M9 3h3l-1.500 1.500z" fill="#fff" /><path d="M1.500 6v9h11V6M4 8.500h6M4 11h6" fill="none" stroke={dark} /></g>,
    ContextMenuStrip: <g><path d="M1.500 5v10h12V3H6M5 7.500h6M5 10h6M5 12.500h3" fill="none" stroke={dark} /><path d="M1 0v7l2-2 2 0z" fill={dark} /></g>,
    DataGridView: <g><Cylinder /><path d="M8 2h2v2H8zM11 2h3v2h-3zM8 6h2v2H8zM11 6h3v2h-3zM11 10h3v2h-3z" fill={dark} /></g>,
    DataSet: <g><Cylinder /><path d="M7 2c0-1 1.500-1.500 3.500-1.500S14 1 14 2v6c0 1-1.500 1.500-3.500 1.500H8V5.500L7 5z" fill="#1ba1e2" /></g>,
    DateTimePicker: <g><path d="M0 1h14v14H0z" fill={dark} /><path d="M2 6h2v2H2zM5 6h2v2H5zM8 6h2v2H8zM11 6h1.500v2H11zM2 9h2v2H2zM5 9h2v2H5zM8 9h2v2H8zM11 9h1.500v2H11zM2 12h2v1.500H2zM5 12h2v1.500H5zM8 12h2v1.500H8z" fill="#f7f9fe" /></g>,
    DirectoryEntry: <g><path d="M0 1h14v13H6V5H0z" fill={dark} /><path d="M1 8h3v2h2v3H3v-1H1z" fill="#c27d1a" /><path d="M2 3h6v1H2z" fill="#f7f9fe" /></g>,
    DirectorySearcher: <g><circle cx="9" cy="6" r="4.500" fill="none" stroke={dark} /><path d="M6 9.500L1 15" stroke={dark} strokeWidth="1.500" /></g>,
    DomainUpDown: <g><path d="M.5 2.500h13v12H.5z" fill="none" stroke={dark} /><path d="M9 2h5v13H9z" fill={dark} /><path d="M11.500 4l1.500 2h-3zM11.500 13L10 11h3z" fill="#f7f9fe" /></g>,
    ErrorProvider: <g><circle cx="7" cy="8" r="7" fill={dark} /><path d="M4.500 5.500l5 5M9.500 5.500l-5 5" stroke="#fff" strokeWidth="2" /></g>,
    EventLog: <g><path d="M2.500 2h10v12h-10zM1 4v8" fill="none" stroke={dark} /><path d="M8 4L5 9h2l-1 3 3-4.500H7z" fill={dark} /></g>,
    FileSystemWatcher: <g><path d="M0 1h14v3H0zM13 4h1v10h-1z" fill={dark} /><circle cx="3.500" cy="12" r="2.500" fill="none" stroke={dark} /><circle cx="9.500" cy="12" r="2.500" fill="none" stroke={dark} /><path d="M1.500 10l3-4h5l2 4" fill="none" stroke={dark} /></g>,
    FlowLayoutPanel: <g><path d="M.5 2.500h13v12H.5z" fill="none" stroke={dark} strokeDasharray="1 1" /><path d="M3 5h3v3H3zM7 5h4v3H7zM3 9h3v2H3z" fill={dark} /></g>,
    FolderBrowserDialog: <g><path d="M.5 3h13v11H7" fill="none" stroke={dark} /><path d="M0 6h4l1-1h4v10H0z" fill={dark} /><path d="M0 1h14v2H0z" fill={dark} /></g>,
    FontDialog: <g><path d="M0 2h14v2H0zM.5 4v10.500h13V4" fill={dark} stroke={dark} /><path d="M1 5h12v9H1z" fill="#f7f9fe" /><path d="M2 13l3-6h2v6H6v-2H4l-1 2zM9 8h4v1H9zM9 10h4v1H9zM9 12h4v1H9z" fill={dark} /></g>,
    GroupBox: <g><path d="M3 3H.5v11.500h13V3H11" fill="none" stroke={dark} /><text x="7" y="6" fontSize="6" fontWeight="700" textAnchor="middle" fill={dark}>XY</text></g>,
    HelpProvider: <g><path d="M1 1h12v14H1z" fill={dark} /><text x="7" y="12" fontSize="11" fontWeight="700" textAnchor="middle" fill="#fff">?</text></g>,
    HScrollBar: <g><path d="M0 5h14v6H0z" fill={dark} /><path d="M3 6.500L1.500 8 3 9.500zM11 6.500L12.500 8 11 9.500zM5 5h1v6H5zM8 5h1v6H8z" fill="#f7f9fe" /></g>,
    ImageList: <path d="M2 1h10v3H2zM1 5h12v8H1z" fill="none" stroke={dark} />
  };
  return <svg width="14" height="16" viewBox="0 0 14 16">{glyphs[name]}</svg>;
}
